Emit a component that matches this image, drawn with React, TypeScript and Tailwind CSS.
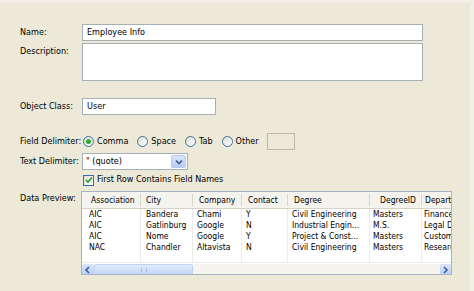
import React from "react";

// Import wizard: delimited file settings (XP-style form)

interface Row {
    association: string;
    city: string;
    company: string;
    contact: string;
    degree: string;
    degreeId: string;
    dept: string;
}

const rows: Row[] = [
    { association: "AIC", city: "Bandera", company: "Chami", contact: "Y", degree: "Civil Engineering", degreeId: "Masters", dept: "Finance" },
    { association: "AIC", city: "Gatlinburg", company: "Google", contact: "N", degree: "Industrial Engin...", degreeId: "M.S.", dept: "Legal Dept" },
    { association: "AIC", city: "Nome", company: "Google", contact: "Y", degree: "Project & Const...", degreeId: "Masters", dept: "Customer" },
    { association: "NAC", city: "Chandler", company: "Altavista", contact: "N", degree: "Civil Engineering", degreeId: "Masters", dept: "Research" },
];

const Radio: React.FC<{ checked?: boolean; label: string }> = ({ checked, label }) => (
    <div className="flex items-center gap-[3px]">
        <span className="flex h-[11px] w-[11px] items-center justify-center rounded-full border border-[#3d6f9c] bg-gradient-to-br from-[#dcdcd6] to-white">
            {checked && <span className="h-[5px] w-[5px] rounded-full bg-[#2bb02b]" />}
        </span>
        <span>{label}</span>
    </div>
);

const Chevron: React.FC<{ dir: "left" | "right" | "down" }> = ({ dir }) => {
    const d =
        dir === "left" ? "M5 1 L2 4 L5 7" : dir === "right" ? "M2 1 L5 4 L2 7" : "M1 2.5 L4 5.5 L7 2.5";
    return (
        <svg width="8" height="8" viewBox="0 0 8 8">
            <path d={d} fill="none" stroke="#3b5b9a" strokeWidth="1.6" />
        </svg>
    );
};

export default function App() {
    return (
        <div className="h-[291px] w-[474px] overflow-hidden border-t-[3px] border-r-[4px] border-[#f2f0e6] bg-[#ece9d8] font-['DejaVu_Sans_Condensed','DejaVu_Sans',sans-serif] text-[9px] text-black">
            <div className="pl-[20px] pt-[21px]">
                {/* Name */}
                <div className="flex h-[17px] items-center">
                    <span className="w-[62px]">Name:</span>
                    <div className="flex h-[17px] w-[341px] items-center border border-[#a7afb6] bg-white px-[4px]">
                        Employee Info
                    </div>
                </div>

                {/* Description */}
                <div className="mt-[2px] flex">
                    <span className="mt-[2px] w-[62px]">Description:</span>
                    <div className="h-[38px] w-[341px] border border-[#a7afb6] bg-white" />
                </div>

                {/* Object class */}
                <div className="mt-[17px] flex h-[17px] items-center">
                    <span className="w-[62px]">Object Class:</span>
                    <div className="flex h-[17px] w-[134px] items-center border border-[#a7afb6] bg-white px-[4px]">
                        User
                    </div>
                </div>

                {/* Field delimiter */}
                <div className="mt-[18px] flex h-[17px] items-center">
                    <span className="w-[63px]">Field Delimiter:</span>
                    <div className="flex items-center gap-[9px]">
                        <Radio checked label="Comma" />
                        <Radio label="Space" />
                        <Radio label="Tab" />
                        <Radio label="Other" />
                    </div>
                    <div className="ml-[8px] h-[17px] w-[28px] border border-[#b8b8b0] bg-[#ece9d8]" />
                </div>

                {/* Text delimiter */}
                <div className="mt-[3px] flex h-[17px] items-center">
                    <span className="w-[62px]">Text Delimiter:</span>
                    <div className="flex h-[17px] w-[106px] items-center border border-[#a7afb6] bg-white">
                        <span className="flex-1 pl-[3px]">" (quote)</span>
                        <div className="mr-[1px] flex h-[13px] w-[15px] items-center justify-center rounded-[2px] border border-[#b9c9ef] bg-gradient-to-b from-[#dce6fb] to-[#b7cbf5]">
                            <Chevron dir="down" />
                        </div>
                    </div>
                </div>

                {/* First row checkbox */}
                <div className="mt-[3px] flex h-[14px] items-center pl-[63px]">
                    <span className="flex h-[11px] w-[11px] items-center justify-center border border-[#3d6f9c] bg-gradient-to-br from-[#dcdcd6] to-white">
                        <svg width="8" height="8" viewBox="0 0 8 8">
                            <path d="M1 4 L3 6 L7 1.5" fill="none" stroke="#21a121" strokeWidth="1.6" />
                        </svg>
                    </span>
                    <span className="ml-[3px]">First Row Contains Field Names</span>
                </div>

                {/* Data preview */}
                <div className="mt-[4px] flex">
                    <span className="mt-[1px] w-[61px]">Data Preview:</span>
                    <div className="h-[84px] w-[371px] overflow-hidden border border-[#a5b3c2] bg-white text-[8.5px]">
                        <div className="flex h-[17px] items-center border-b border-[#d6d3c4] bg-[#f4f3ee]">
                            <span className="w-[59px] shrink-0 border-r border-[#d9d6c8] pl-[9px]">Association</span>
                            <span className="w-[52px] shrink-0 border-r border-[#d9d6c8] pl-[5px]">City</span>
                            <span className="w-[49px] shrink-0 border-r border-[#d9d6c8] pl-[6px]">Company</span>
                            <span className="w-[46px] shrink-0 border-r border-[#d9d6c8] pl-[6px]">Contact</span>
                            <span className="w-[82px] shrink-0 border-r border-[#d9d6c8] pl-[6px]">Degree</span>
                            <span className="w-[52px] shrink-0 border-r border-[#d9d6c8] pr-[5px] text-right">DegreeID</span>
                            <span className="w-[40px] shrink-0 whitespace-nowrap pl-[3px]">Department</span>
                        </div>
                        <div className="flex flex-col">
                            {rows.map((r, i) => (
                                <div key={i} className="flex h-[11px] items-center whitespace-nowrap leading-[11px]">
                                    <span className="w-[59px] shrink-0 border-r border-[#ebebeb] pl-[7px]">{r.association}</span>
                                    <span className="w-[52px] shrink-0 border-r border-[#ebebeb] pl-[5px]">{r.city}</span>
                                    <span className="w-[49px] shrink-0 border-r border-[#ebebeb] pl-[4px]">{r.company}</span>
                                    <span className="w-[46px] shrink-0 border-r border-[#ebebeb] pl-[4px]">{r.contact}</span>
                                    <span className="w-[82px] shrink-0 border-r border-[#ebebeb] pl-[4px]">{r.degree}</span>
                                    <span className="w-[52px] shrink-0 border-r border-[#ebebeb] pl-[3px]">{r.degreeId}</span>
                                    <span className="w-[40px] shrink-0 overflow-hidden pl-[2px]">{r.dept}</span>
                                </div>
                            ))}
                            <div className="flex h-[10px] border-b border-[#ebebeb]">
                                <span className="w-[59px] shrink-0 border-r border-[#ebebeb]" />
                                <span className="w-[52px] shrink-0 border-r border-[#ebebeb]" />
                                <span className="w-[49px] shrink-0 border-r border-[#ebebeb]" />
                                <span className="w-[46px] shrink-0 border-r border-[#ebebeb]" />
                                <span className="w-[82px] shrink-0 border-r border-[#ebebeb]" />
                                <span className="w-[52px] shrink-0 border-r border-[#ebebeb]" />
                            </div>
                        </div>
                        {/* horizontal scrollbar */}
                        <div className="mt-[1px] flex h-[12px] bg-[#f5f4ef]">
                            <div className="flex w-[12px] items-center justify-center rounded-[2px] bg-gradient-to-b from-[#dbe5fb] to-[#b9cdf6]">
                                <Chevron dir="left" />
                            </div>
                            <div className="flex w-[99px] items-center justify-center rounded-[2px] border border-[#c4d3f2] bg-gradient-to-b from-[#e1e9fc] to-[#c3d4f7]">
                                <span className="h-[5px] w-[6px] border-x border-[#a9bce6]" />
                            </div>
                            <div className="flex-1" />
                            <div className="flex w-[11px] items-center justify-center rounded-[2px] bg-gradient-to-b from-[#dbe5fb] to-[#b9cdf6]">
                                <Chevron dir="right" />
                            </div>
                        </div>
                    </div>
                </div>
            </div>
        </div>
    );
}
